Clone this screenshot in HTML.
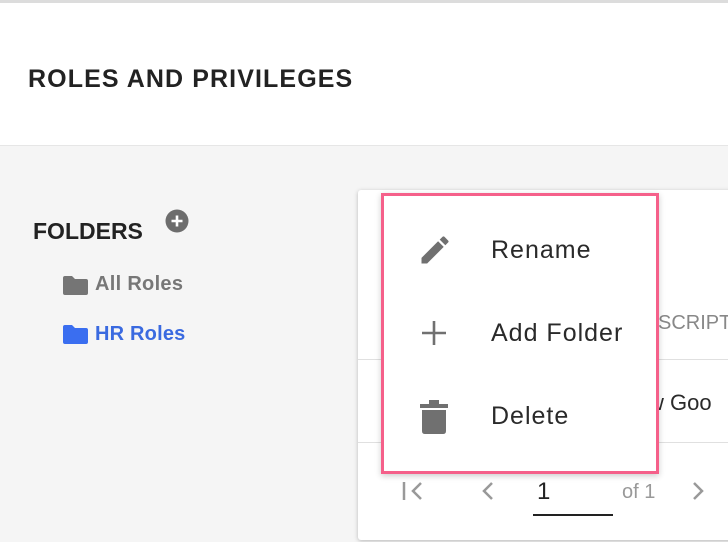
<!DOCTYPE html>
<html><head><style>
*{margin:0;padding:0;box-sizing:border-box}
body{width:728px;height:542px;overflow:hidden;background:#f5f5f5;font-family:"Liberation Sans",sans-serif;position:relative}
.hdr{position:absolute;left:0;top:0;width:728px;height:146px;background:#fff;border-top:3px solid #dcdcdc;border-bottom:1px solid #e6e6e6}
.t{position:absolute;font-size:25px;color:#222;left:28px;top:62px;letter-spacing:1.1px;font-weight:bold}
.abs{position:absolute;white-space:nowrap}
.card{position:absolute;left:358px;top:190px;width:380px;height:350px;background:#fff;border-radius:3px;box-shadow:0 1px 4px rgba(0,0,0,.25)}
.menu{position:absolute;left:381px;top:193px;width:278px;height:281px;background:#fff;border:3px solid #f5608a;box-shadow:0 2px 6px rgba(0,0,0,.2)}
.mi{position:absolute;left:107px;font-size:25px;color:#2a2a2a;letter-spacing:1px}
</style></head><body>
<div class="hdr"><div class="t">ROLES AND PRIVILEGES</div></div>
<div class="abs" style="left:33px;top:218px;font-size:23px;font-weight:bold;color:#222">FOLDERS</div>
<svg class="abs" style="left:165px;top:209px" width="24" height="24"><circle cx="12" cy="12" r="11.5" fill="#6d6d6d"/><path d="M12 6.5v11M6.5 12h11" stroke="#fff" stroke-width="2.6"/></svg>
<svg class="abs" style="left:62px;top:275px" width="27" height="21"><path d="M1 3q0-2 2-2h7l3 3h11q2 0 2 2v12q0 2-2 2H3q-2 0-2-2z" fill="#757575"/></svg>
<div class="abs" style="left:95px;top:273px;font-size:20px;font-weight:bold;color:#777;letter-spacing:.3px">All Roles</div>
<svg class="abs" style="left:62px;top:324px" width="27" height="21"><path d="M1 3q0-2 2-2h7l3 3h11q2 0 2 2v12q0 2-2 2H3q-2 0-2-2z" fill="#3a6ef0"/></svg>
<div class="abs" style="left:95px;top:323px;font-size:20px;font-weight:bold;color:#3a6ae0;letter-spacing:.2px">HR Roles</div>
<div class="card">
<div class="abs" style="left:0;top:169px;width:380px;border-top:1px solid #e0e0e0"></div>
<div class="abs" style="left:0;top:252px;width:380px;border-top:1px solid #e0e0e0"></div>
<div class="abs" style="left:300px;top:122px;font-size:20px;color:#888">SCRIPT</div>
<div class="abs" style="left:290px;top:200px;font-size:22px;color:#2a2a2a">w Goo</div>
<svg class="abs" style="left:43px;top:290px" width="26" height="22"><path d="M3 2v18M20 3l-8 8 8 8" stroke="#999" stroke-width="2.5" fill="none"/></svg>
<svg class="abs" style="left:122px;top:290px" width="16" height="22"><path d="M12 3l-8 8 8 8" stroke="#999" stroke-width="2.5" fill="none"/></svg>
<div class="abs" style="left:179px;top:288px;font-size:24px;color:#222">1</div>
<div class="abs" style="left:175px;top:324px;width:80px;border-top:2px solid #222"></div>
<div class="abs" style="left:264px;top:291px;font-size:20px;color:#999">of 1</div>
<svg class="abs" style="left:332px;top:290px" width="16" height="22"><path d="M4 3l8 8-8 8" stroke="#999" stroke-width="2.5" fill="none"/></svg>
</div>
<div class="menu">
<svg class="abs" style="left:33px;top:36px" width="36" height="36" viewBox="0 0 24 24"><path fill="#707070" d="M3 17.25V21h3.75L17.81 9.94l-3.75-3.75L3 17.25zM20.71 7.04a1 1 0 0 0 0-1.41l-2.34-2.34a1 1 0 0 0-1.41 0l-1.830 1.83 3.75 3.75 1.83-1.83z"/></svg>
<div class="mi" style="top:40px">Rename</div>
<svg class="abs" style="left:36px;top:123px" width="28" height="28"><path d="M14 2v24M2 14h24" stroke="#707070" stroke-width="2.6"/></svg>
<div class="mi" style="top:123px">Add Folder</div>
<svg class="abs" style="left:36px;top:203px" width="28" height="36" viewBox="0 0 28 36"><path fill="#707070" d="M0 5h28v4H0zM9 1h10v4H9zM2 11h24v21q0 3-3 3H5q-3 0-3-3z"/></svg>
<div class="mi" style="top:206px">Delete</div>
</div>
</body></html>
